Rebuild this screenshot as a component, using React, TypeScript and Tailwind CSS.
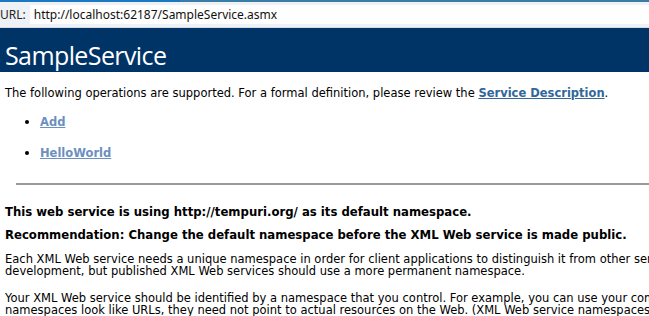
export default function App() {
    return (
        <div className="w-[649px] h-[316px] overflow-hidden bg-white font-['DejaVu_Sans',sans-serif] text-black">
            <div className="flex h-[2px]">
                <div className="w-[180px] bg-[#1b78c2]" />
                <div className="flex-1 bg-[#3b7ba6]" />
            </div>
            <div className="h-[26px] bg-[#eef1f6] flex items-center border-b border-[#d6dbe6]">
                <span className="text-[12px] pr-[4px] font-['Noto_Sans',sans-serif] text-[#222]">URL:</span>
                <div className="flex-1 h-[19px] bg-[#fdfefd] flex items-center pl-[4px] text-[12px] font-['Noto_Sans',sans-serif] text-[#111]">
                    http://localhost:62187/SampleService.asmx
                </div>
            </div>
            <div className="h-[44px] bg-[#003366] flex items-end pl-[5px] pb-[4px]">
                <span className="text-[25px] leading-none text-white font-['Open_Sans',sans-serif] tracking-[-0.6px]">SampleService</span>
            </div>
            <div className="pl-[5px] text-[11.5px]">
                <p className="mt-[14px] leading-[14px] whitespace-nowrap">
                    The following operations are supported. For a formal definition, please review the{" "}
                    <a className="font-bold underline text-[#336699]">Service Description</a>.
                </p>
                <ul className="mt-[14px] pl-[35px] list-disc leading-[14px] marker:text-[14px]">
                    <li><a className="font-bold underline text-[#6b8fbf]">Add</a></li>
                    <li className="mt-[16px]"><a className="font-bold underline text-[#6b8fbf]">HelloWorld</a></li>
                </ul>
                <hr className="mt-[23px] ml-[11px] border-t-2 border-[#9a9a9a]" />
                <p className="mt-[19px] font-bold text-[11.7px] leading-[16px] whitespace-nowrap">This web service is using http://tempuri.org/ as its default namespace.</p>
                <p className="mt-[7px] font-bold text-[11.7px] leading-[16px] whitespace-nowrap">Recommendation: Change the default namespace before the XML Web service is made public.</p>
                <p className="mt-[10px] whitespace-nowrap leading-[12px]">
                    Each XML Web service needs a unique namespace in order for client applications to distinguish it from other services on the Web.<br />
                    development, but published XML Web services should use a more permanent namespace.
                </p>
                <p className="mt-[15px] whitespace-nowrap leading-[12px]">
                    Your XML Web service should be identified by a namespace that you control. For example, you can use your company's Internet domain name.<br />
                    namespaces look like URLs, they need not point to actual resources on the Web. (XML Web service namespaces are URIs.)
                </p>
            </div>
        </div>
    );
}
